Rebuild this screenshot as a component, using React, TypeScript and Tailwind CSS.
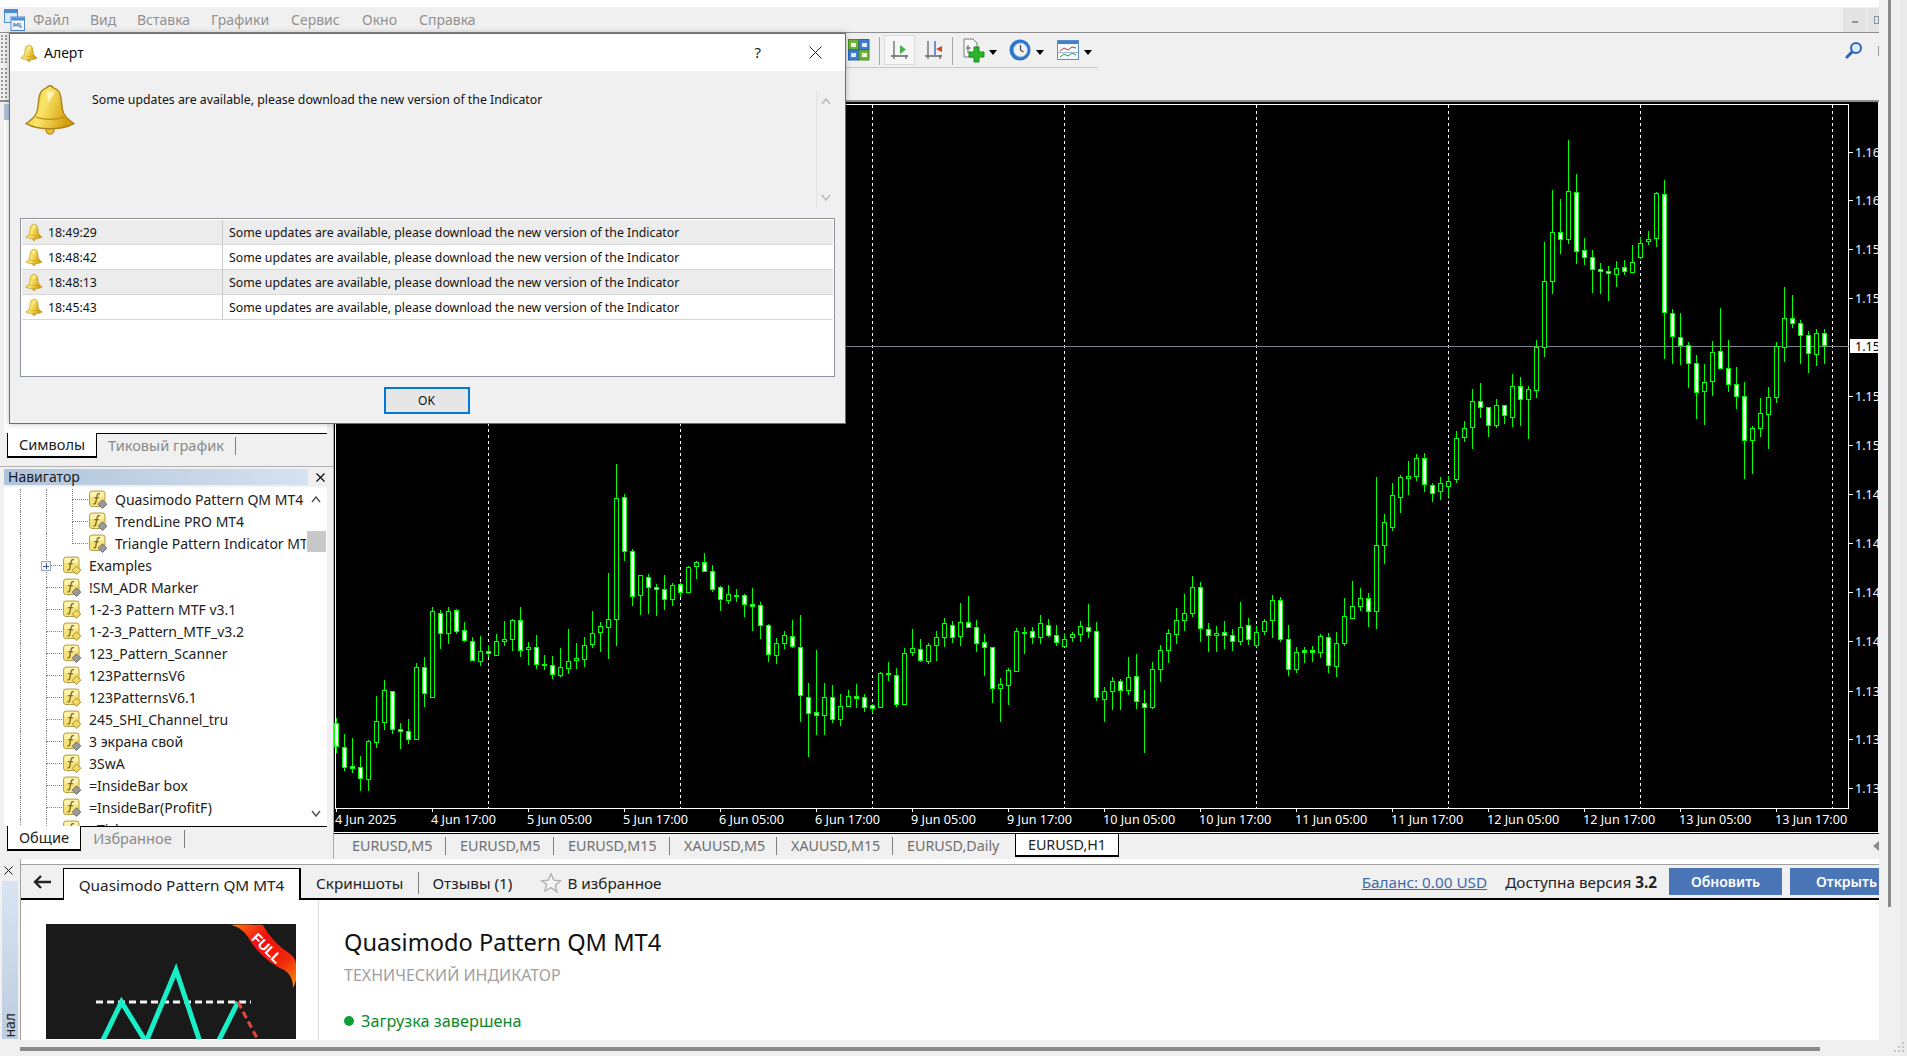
const LOWER: number[][] = [
  [895,910,978,1000,1],[942,980,1040,1052,1],[955,1037,1045,1058,1],[1008,1042,1075,1112,1],[960,964,1076,1112,0],
  [828,902,965,984,0],[780,811,905,930,0],[812,814,928,942,1],[910,928,934,987,1],[897,934,956,972,1],
  [730,742,956,956,0],[712,740,820,860,1],[562,574,830,830,0],[570,578,640,687,1],[562,572,640,672,0],
  [568,571,632,642,1],[606,631,661,665,1],[652,664,721,722,1],[648,694,722,738,0],[675,694,700,712,1],
  [642,664,704,704,0],[603,658,664,678,0],[598,601,658,692,0],[562,601,690,711,1],[666,682,688,735,0],
  [645,680,733,747,1],[705,733,734,750,0],[708,734,763,776,1],[685,742,764,770,0],[628,724,745,762,0],
  [670,715,721,747,0],[652,674,718,741,0],[574,638,673,684,0],[606,619,637,696,0],[460,598,622,716,0],
  [132,235,598,678,0],[223,232,394,423,1],[388,394,528,557,1],[466,466,526,585,0],[462,470,502,582,1],
  [492,500,508,587,1],[465,508,538,570,1],[488,496,538,558,0],[488,493,517,530,1],[438,442,517,517,0],
  [423,427,439,476,0],[400,427,452,456,1],[436,452,506,516,1],[498,502,538,572,1],[495,523,539,552,0],
  [507,524,524,546,0],[522,524,553,590,1],[505,553,557,632,1],[545,556,616,657,1],[612,614,703,725,1],
  [655,670,704,731,0],[632,646,668,687,0],[600,647,679,685,1],[585,680,826,905,1],[790,832,878,1010,1],
  [690,877,884,945,1],[790,832,884,945,0],[795,832,898,908,1],[822,857,898,917,0],[810,829,857,858,0],
  [792,827,835,863,1],[822,832,860,875,1],[853,854,865,878,1],[757,760,860,860,0],[727,760,761,782,0],
  [745,764,853,860,1],[685,700,851,851,0],[628,685,697,708,0],[657,686,721,725,1],[670,676,722,732,0],
  [632,652,676,722,0],[595,610,650,680,0],[604,614,650,668,1],[549,607,647,678,0],[528,607,622,622,1],
  [600,622,670,695,1],[642,667,682,768,1],[680,682,805,848,1],[774,793,805,905,0],[745,751,796,855,0],
  [625,634,752,755,0],[622,635,637,702,1],[622,634,652,672,1],[586,610,652,672,0],[598,614,646,650,1],
  [616,646,667,678,1],[640,658,677,679,0],[637,643,652,665,0],[603,619,643,665,0],[552,620,634,654,1],
  [606,634,832,843,1],[801,814,838,905,0],[771,784,814,869,0],[778,784,811,869,1],[711,771,811,825,0],
  [702,769,844,866,1],[810,848,862,1000,1],[726,748,862,868,0],[676,691,748,785,0],[628,640,691,728,0],
  [564,601,643,671,0],[522,580,601,633,0],[468,502,580,590,0],[487,502,625,665,1],[610,628,646,695,1],
  [618,640,646,695,0],[603,637,646,686,1],[628,646,664,692,1],[546,622,664,674,0],[595,616,658,675,1],
  [619,637,674,680,0],[598,604,634,645,0],[526,541,601,654,0],[532,541,658,665,1],[616,658,748,768,1],
  [682,697,748,758,0],[682,691,697,728,1],[678,691,697,726,1],[642,649,697,714,0],[640,650,736,758,1],
  [636,670,737,771,0],[534,589,670,678,0],[484,559,593,596,0],[504,535,559,573,0],[519,535,574,621,1],
  [171,376,574,627,0],[282,307,376,431,0],[189,226,320,333,0],
]

const UPPER: number[][] = [
  [1065,1072,1130,1180,0],[1024,1069,1075,1125,0],[1002,1015,1069,1082,0],[999,1015,1092,1115,1],[1090,1096,1120,1145,1],
  [1072,1090,1114,1140,0],[1069,1084,1099,1132,0],[934,955,1078,1088,0],[904,925,952,966,0],[808,844,922,987,0],
  [790,844,862,894,1],[860,862,916,951,1],[838,856,914,924,0],[856,856,886,912,1],[763,799,892,921,0],
  [771,799,838,918,1],[799,808,838,957,0],[660,682,811,834,0],[367,484,682,711,0],[210,337,484,522,0],
  [237,337,358,402,1],[60,214,358,372,0],[162,217,394,432,1],[354,391,412,435,1],[391,412,448,519,1],
  [430,448,454,522,1],[438,454,460,543,1],[423,445,463,501,0],[420,442,454,464,1],[376,427,456,459,0],
  [352,370,410,418,0],[333,358,364,375,0],[217,220,355,381,0],[180,223,577,717,1],[568,580,649,732,1],
  [579,652,676,735,1],[666,676,730,804,1],[705,730,817,897,1],[732,787,814,915,0],[663,697,784,828,0],
  [564,694,745,745,1],[660,745,793,816,1],[741,793,829,867,1],[786,829,961,1077,1],[918,925,961,1062,0],
  [835,880,925,951,0],[801,832,883,987,0],[666,678,832,849,0],[501,595,682,726,0],[525,595,610,624,1],
  [600,610,646,732,1],[633,646,700,759,1],[627,640,703,738,0],[627,640,676,732,1],
]

const CANDLES = [
  ...LOWER.map(c => ({ hi: 420 + c[0] / 3, top: 420 + c[1] / 3, bot: 420 + c[2] / 3, lo: 420 + c[3] / 3, fill: c[4] === 1 })),
  ...UPPER.map(c => ({ hi: 120 + c[0] / 3, top: 120 + c[1] / 3, bot: 120 + c[2] / 3, lo: 120 + c[3] / 3, fill: c[4] === 1 })),
]

const TIME_LABELS = ['4 Jun 2025', '4 Jun 17:00', '5 Jun 05:00', '5 Jun 17:00', '6 Jun 05:00', '6 Jun 17:00', '9 Jun 05:00', '9 Jun 17:00',
  '10 Jun 05:00', '10 Jun 17:00', '11 Jun 05:00', '11 Jun 17:00', '12 Jun 05:00', '12 Jun 17:00', '13 Jun 05:00', '13 Jun 17:00']
const PRICE_LABELS = ['1.16350', '1.16120', '1.15890', '1.15660', '1.15200', '1.15010', '1.14970', '1.14740', '1.14510', '1.14280', '1.13820', '1.13590', '1.13360']
const PRICE_Y = [152, 200, 249, 298, 396, 445, 494, 543, 592, 641, 691, 739, 788]
const GRID_X = [489, 681, 873, 1065, 1257, 1449, 1641, 1833]

const ALERTS = ['18:49:29', '18:48:42', '18:48:13', '18:45:43']
const ALERT_TEXT = 'Some updates are available, please download the new version of the Indicator'

const MENU = [['Файл', 'w-[57px]'], ['Вид', 'w-[47px]'], ['Вставка', 'w-[74px]'], ['Графики', 'w-[80px]'], ['Сервис', 'w-[71px]'], ['Окно', 'w-[57px]'], ['Справка', 'w-[70px]']]

const CHART_TABS = [['EURUSD,M5', 'w-[108px] border-r'], ['EURUSD,M5', 'w-[108px] border-r'], ['EURUSD,M15', 'w-[116px] border-r'], ['XAUUSD,M5', 'w-[107px] border-r'], ['XAUUSD,M15', 'w-[116px] border-r'], ['EURUSD,Daily', 'w-[122px]']]

const TREE: { name: string; gray: boolean; deep?: boolean; last?: boolean; plus?: boolean }[] = [
  { name: 'Quasimodo Pattern QM MT4', gray: true, deep: true },
  { name: 'TrendLine PRO MT4', gray: true, deep: true },
  { name: 'Triangle Pattern Indicator MT4', gray: true, deep: true, last: true },
  { name: 'Examples', gray: false, plus: true },
  { name: '!SM_ADR Marker', gray: true },
  { name: '1-2-3 Pattern MTF v3.1', gray: false },
  { name: '1-2-3_Pattern_MTF_v3.2', gray: false },
  { name: '123_Pattern_Scanner', gray: true },
  { name: '123PatternsV6', gray: false },
  { name: '123PatternsV6.1', gray: false },
  { name: '245_SHI_Channel_tru', gray: false },
  { name: '3 экрана свой', gray: true },
  { name: '3SwA', gray: false },
  { name: '=InsideBar box', gray: true },
  { name: '=InsideBar(ProfitF)', gray: true },
  { name: '=Ticks', gray: false },
]

function Bell({ size }: { size: number }) {
  return (
    <svg width={size} height={size} viewBox="0 0 48 48" className="shrink-0">
      <defs>
        <linearGradient id="bell-g" x1="0" y1="0" x2="1" y2="0.3">
          <stop offset="0" stopColor="#e2b51e" />
          <stop offset="0.45" stopColor="#fbe56a" />
          <stop offset="1" stopColor="#d49f0c" />
        </linearGradient>
      </defs>
      <circle cx="24" cy="43.5" r="3.6" fill="#e8bf30" stroke="#a9831a" strokeWidth="1.2" />
      <path d="M24 2.5c-1.6 0-2.4 1-2.8 1.8C16.500 5.500 14.500 9 13.800 14L12.600 24C11.800 30 7.500 33.500 2 37.500c6 3.400 14 4.800 22 4.800s16-1.400 22-4.800C40.500 33.500 36.200 30 35.400 24L34.200 14C33.500 9 31.500 5.500 26.800 4.300 26.400 3.500 25.600 2.500 24 2.500Z" fill="url(#bell-g)" stroke="#a9831a" strokeWidth="1.3" />
      <path d="M11 31.500c8 2.600 18 2.600 26 0" fill="none" stroke="#b8901c" strokeWidth="1.1" />
      <path d="M21 8 29 7.500 22 19Z" fill="#fffbd8" opacity="0.7" />
    </svg>
  )
}

function IndicatorIcon({ gray }: { gray: boolean }) {
  return (
    <svg width="20" height="20" viewBox="0 0 20 20" className="shrink-0">
      <rect x="1.500" y="1" width="15.500" height="15.500" rx="2.500" fill="#f6e27a" stroke="#b7a04c" />
      <rect x="2.500" y="2" width="13.500" height="5" rx="1.500" fill="#fdf3ae" />
      <path d="M12 3.800c-1.600-.6-2.500.2-2.800 1.600L7.700 12.500c-.3 1.300-1.100 1.800-2.300 1.200M6.200 7.700h4.600" fill="none" stroke="#7d6a1e" strokeWidth="1.300" />
      <path d="M14.500 9.800 18.800 14.200 14.500 18.500 10.200 14.200Z" fill={gray ? '#9a9a9a' : '#f2d860'} stroke={gray ? '#6f6f6f' : '#a8923c'} />
    </svg>
  )
}

function TreeRow({ name, gray, deep, last, plus }: (typeof TREE)[number]) {
  return (
    <div className="flex h-[22px] items-center">
      <span className="ml-[16px] h-full w-[26px] shrink-0 border-l border-dotted border-[#808080]" />
      {deep && <span className="h-full w-[26px] shrink-0 border-l border-dotted border-[#808080]" />}
      <span className="relative flex h-full w-[16px] shrink-0 flex-col">
        <span className="h-[11px] border-b border-l border-dotted border-[#808080]" />
        {!last && <span className="h-[11px] border-l border-dotted border-[#808080]" />}
        {plus && (
          <span className="absolute -left-[5px] top-[6px] flex h-[10px] w-[10px] items-center justify-center border border-[#9aa7bd] bg-[#f4f6fa]">
            <span className="absolute h-[1px] w-[6px] bg-[#3a5a9a]" />
            <span className="absolute h-[6px] w-[1px] bg-[#3a5a9a]" />
          </span>
        )}
      </span>
      <IndicatorIcon gray={gray} />
      <span className="ml-[7px] whitespace-nowrap text-[14px] leading-[22px] text-[#222]">{name}</span>
    </div>
  )
}

function PanelTabs({ active, activeW, other, otherW }: { active: string; activeW: string; other: string; otherW: string }) {
  return (
    <div className="ml-[3px] flex h-[25px] text-[14.6px]">
      <div className={`${activeW} flex items-center justify-center border-x border-b-2 border-black bg-white text-[#222]`}>{active}</div>
      <div className="flex flex-1 items-start border-t border-black">
        <div className={`${otherW} mt-[3px] flex h-[18px] items-center justify-center border-r border-[#808080] text-[#8a8a8a]`}>{other}</div>
      </div>
    </div>
  )
}

function Chart() {
  return (
    <svg viewBox="335 102 1544 730" width="1544" height="730" shapeRendering="crispEdges" className="block bg-black font-['Noto_Sans',sans-serif]">
      <path d="M336.500 104.500H1849.500V808.500H336.500Z" fill="none" stroke="#fff" />
      {GRID_X.map(x => <line key={x} x1={x + 0.5} x2={x + 0.5} y1="105" y2="808" stroke="#fff" strokeDasharray="3 3" />)}
      <line x1="337" x2="1850" y1="346.500" y2="346.500" stroke="#7c818b" />
      {CANDLES.map((c, i) => {
        const x = 337 + i * 8
        return (
          <g key={i}>
            <line x1={x + 0.5} x2={x + 0.5} y1={c.hi} y2={c.lo} stroke="#00ff00" />
            <rect x={x - 1.5} y={Math.round(c.top) + 0.5} width="4" height={Math.max(Math.round(c.bot) - Math.round(c.top), 1)} fill={c.fill ? '#fff' : '#000'} stroke="#00ff00" />
          </g>
        )
      })}
      {TIME_LABELS.map((t, i) => (
        <g key={t}>
          <line x1={337.5 + i * 96} x2={337.5 + i * 96} y1="809" y2="812" stroke="#fff" />
          <text x={336 + i * 96} y="824" fontSize="12.6" fill="#fff" shapeRendering="auto">{t}</text>
        </g>
      ))}
      {PRICE_LABELS.map((p, i) => (
        <g key={p}>
          <line x1="1850" x2="1854" y1={PRICE_Y[i] + 0.5} y2={PRICE_Y[i] + 0.5} stroke="#fff" />
          <text x="1856" y={PRICE_Y[i] + 5} fontSize="12.6" fill="#eef2ff" shapeRendering="auto">{p}</text>
        </g>
      ))}
      <rect x="1851" y="339" width="28" height="14" fill="#fff" />
      <text x="1856" y="351" fontSize="12.6" fill="#000" shapeRendering="auto">1.15430</text>
    </svg>
  )
}

function ToolbarIcons() {
  return (
    <div className="flex h-[35px] w-[253px] items-start border-b border-[#c8c8c8]">
      <svg width="22" height="22" viewBox="0 0 22 22" className="ml-[3px] mt-[6px] shrink-0">
        <rect x="0.500" y="0.500" width="10" height="10" fill="#6fb13c" stroke="#4f8d22" />
        <rect x="11" y="0.500" width="10" height="10" fill="#3c7fd0" stroke="#2a62b0" />
        <rect x="0.500" y="11" width="10" height="10" fill="#3c7fd0" stroke="#2a62b0" />
        <rect x="11" y="11" width="10" height="10" fill="#6fb13c" stroke="#4f8d22" />
        <rect x="3" y="4" width="5" height="4" fill="#eaf6dc" />
        <rect x="14" y="4" width="5" height="4" fill="#dfeafa" />
        <rect x="3" y="14" width="5" height="4" fill="#dfeafa" />
        <rect x="14" y="14" width="5" height="4" fill="#eaf6dc" />
      </svg>
      <span className="ml-[9px] mt-[4px] h-[28px] w-[1px] shrink-0 bg-[#a8a8a8]" />
      <div className="ml-[4px] mt-[2px] flex h-[30px] w-[31px] shrink-0 items-center justify-center border border-[#dcdcdc] bg-[#f6f6f6]">
        <svg width="20" height="20" viewBox="0 0 20 20">
          <path d="M4 1v16M1 16h17M4 17v2M16 15v4" stroke="#666" strokeWidth="1.300" fill="none" />
          <path d="M10 5l6 4.500-6 4.500Z" fill="#3cb44a" />
        </svg>
      </div>
      <svg width="20" height="20" viewBox="0 0 20 20" className="ml-[9px] mt-[7px] shrink-0">
        <path d="M4 1v16M1 16h17M4 17v2M16 15v4" stroke="#666" strokeWidth="1.300" fill="none" />
        <path d="M11 1v14" stroke="#2f6db5" strokeWidth="1.400" />
        <path d="M12 9l6-3v6Z" fill="#d0431e" />
      </svg>
      <span className="ml-[8px] mt-[4px] h-[28px] w-[1px] shrink-0 bg-[#a8a8a8]" />
      <svg width="25" height="25" viewBox="0 0 25 25" className="ml-[10px] mt-[5px] shrink-0">
        <path d="M1 1h9l4 4v14H1Z" fill="#f8f8f8" stroke="#7a7a7a" />
        <path d="M5 7v8M3 10h5" stroke="#555" fill="none" />
        <path d="M11 9h5v5h5v5h-5v5h-5v-5H6v-5h5Z" fill="#2bb52b" stroke="#168a16" />
      </svg>
      <svg width="8" height="5" viewBox="0 0 8 5" className="ml-[1px] mt-[17px] shrink-0"><path d="M0 0h8L4 5Z" fill="#000" /></svg>
      <svg width="22" height="22" viewBox="0 0 22 22" className="ml-[12px] mt-[6px] shrink-0">
        <circle cx="11" cy="11" r="10.500" fill="#2a76c8" />
        <circle cx="11.500" cy="11" r="7" fill="#f3f3f3" stroke="#8ab8e6" />
        <path d="M11.500 6v5l3 2" stroke="#444" fill="none" strokeWidth="1.200" />
      </svg>
      <svg width="8" height="5" viewBox="0 0 8 5" className="ml-[5px] mt-[17px] shrink-0"><path d="M0 0h8L4 5Z" fill="#000" /></svg>
      <svg width="22" height="20" viewBox="0 0 22 20" className="ml-[13px] mt-[7px] shrink-0">
        <rect x="0.500" y="0.500" width="21" height="19" fill="#f4f7fb" stroke="#5c8ec8" />
        <rect x="1" y="1" width="20" height="3" fill="#3f7fd0" />
        <path d="M3 11l4-3 4 2 4-3 4 1" stroke="#c03c1c" fill="none" />
        <path d="M3 17l4-3 4 2 4-3 4 2" stroke="#2f9a3a" fill="none" />
        <path d="M1 12.500h20" stroke="#9cb8dc" />
      </svg>
      <svg width="8" height="5" viewBox="0 0 8 5" className="ml-[5px] mt-[17px] shrink-0"><path d="M0 0h8L4 5Z" fill="#000" /></svg>
    </div>
  )
}

function ProductImage() {
  return (
    <svg width="250" height="115" viewBox="0 0 250 115" className="mt-[24px] ml-[25px] block shrink-0 bg-[#1a1a1a]">
      <defs>
        <linearGradient id="ribbon-g" x1="0" y1="0" x2="1" y2="1">
          <stop offset="0" stopColor="#ff7a10" />
          <stop offset="0.35" stopColor="#f01010" />
          <stop offset="0.7" stopColor="#f02808" />
          <stop offset="1" stopColor="#f89010" />
        </linearGradient>
      </defs>
      <path d="M185 1C195 0 205 1 217 1 222 10 230 20 240 27 247 31 250 36 250 40L250 56C249 60 248 62 247 64 247 55 244 50 238 46 225 40 213 30 205 18 200 8 193 3 185 1Z" fill="url(#ribbon-g)" />
      <text x="221" y="29" textAnchor="middle" fontSize="14" fontWeight="700" fill="#fff" transform="rotate(45 221 24)" className="font-['Liberation_Sans',sans-serif]">FULL</text>
      <path d="M50 78H205" stroke="#f2f2f2" strokeWidth="3" strokeDasharray="7 4" />
      <path d="M56 118 75.500 78 100 118 130 46 154 118M172 118 192 78" fill="none" stroke="#19efc6" strokeWidth="5" />
      <path d="M192 78 212 116" stroke="#e8443c" strokeWidth="3" strokeDasharray="7 4" />
    </svg>
  )
}

function AlertDialog() {
  return (
    <div className="absolute left-[9px] top-[33px] flex h-[391px] w-[837px] flex-col border border-[#6e6e6e] bg-[#f0f0f0] shadow-[0_0_6px_rgba(0,0,0,0.25)]">
      <div className="flex h-[37px] items-center bg-white pl-[10px]">
        <Bell size={18} />
        <span className="ml-[6px] text-[14px] text-[#111]">Алерт</span>
        <span className="ml-auto text-[15px] text-[#222]">?</span>
        <svg width="13" height="13" viewBox="0 0 13 13" className="ml-[48px] mr-[23px]"><path d="M.5.500l12 12M12.500.500l-12 12" stroke="#222" fill="none" /></svg>
      </div>
      <div className="flex h-[147px]">
        <div className="ml-[14px] mt-[12px]"><Bell size={52} /></div>
        <p className="ml-[16px] mt-[20px] whitespace-nowrap text-[12.3px] leading-[18px] text-[#111]">{ALERT_TEXT}</p>
        <div className="ml-auto mr-[10px] mt-[20px] flex h-[117px] w-[19px] flex-col items-center justify-between border-l border-[#e2e2e2] py-[7px]">
          <svg width="10" height="7" viewBox="0 0 10 7"><path d="M1 6l4-5 4 5" fill="none" stroke="#b9b9b9" strokeWidth="1.500" /></svg>
          <svg width="10" height="7" viewBox="0 0 10 7"><path d="M1 1l4 5 4-5" fill="none" stroke="#b9b9b9" strokeWidth="1.500" /></svg>
        </div>
      </div>
      <div className="mx-[10px] h-[159px] border border-[#8f949c] bg-white p-[1px]">
        {ALERTS.map((t, i) => (
          <div key={t} className={`flex h-[25px] border-b border-[#d8d8d8] ${i % 2 === 0 ? 'bg-[#ececec]' : 'bg-white'}`}>
            <div className="flex w-[201px] items-center border-r border-[#c8c8c8] pl-[3px]">
              <Bell size={18} />
              <span className="ml-[5px] pt-[2px] text-[12.3px] text-[#111]">{t}</span>
            </div>
            <div className="flex items-center pl-[6px] pt-[2px] text-[12.3px] text-[#111]">{ALERT_TEXT}</div>
          </div>
        ))}
      </div>
      <div className="flex flex-1 items-start justify-center pr-[2px] pt-[10px]">
        <button className="h-[27px] w-[86px] border-2 border-[#0078d7] bg-[#e6e6e6] text-[12px] text-[#111]">OK</button>
      </div>
    </div>
  )
}

export default function App() {
  return (
    <div className="relative flex h-[1056px] w-[1907px] overflow-hidden bg-[#f0f0f0] font-['Noto_Sans',sans-serif]">
      <div className="flex w-[1879px] shrink-0 flex-col overflow-hidden">
        <div className="h-[7px] bg-white" />

        {/* Menu */}
        <div className="flex h-[25px] items-center">
          <svg width="21" height="22" viewBox="0 0 21 22" className="ml-[4px] shrink-0">
            <rect x="0.500" y="0.500" width="13" height="13" fill="#dbe9f8" stroke="#4d8bd0" />
            <rect x="1" y="1" width="12" height="3" fill="#4d8bd0" />
            <rect x="7" y="8" width="13.500" height="13.500" fill="#f2f7fd" stroke="#4d8bd0" />
            <rect x="7.500" y="8.500" width="12.500" height="3" fill="#4d8bd0" />
            <path d="M10 18v-4l2 3 2-3v4M16 14v4h2" stroke="#3a6ea8" fill="none" />
          </svg>
          <div className="ml-[8px] flex text-[14px] text-[#909090]">
            {MENU.map(([m, w]) => <span key={m} className={w}>{m}</span>)}
          </div>
          <div className="ml-auto flex h-full gap-[1px] pt-[1px]">
            <span className="flex w-[23px] items-center justify-center bg-[#e4e4e4] pt-[4px]"><span className="h-[2px] w-[6px] bg-[#8a94a2]" /></span>
            <span className="flex w-[12px] items-center bg-[#e4e4e4] pl-[7px]"><span className="h-[8px] w-[5px] border border-[#8a94a2]" /></span>
          </div>
        </div>

        {/* Toolbar */}
        <div className="flex h-[68px] border-t border-[#8e8e8e] bg-[#f0f0f0]">
          <div className="flex w-[9px] flex-col gap-[5px] pl-[1px] pt-[2px]">
            <span className="h-[28px] w-[6px] border-x-2 border-dotted border-[#9a9a9a]" />
            <span className="h-[30px] w-[6px] border-x-2 border-dotted border-[#9a9a9a]" />
          </div>
          <div className="w-[836px]" />
          <ToolbarIcons />
          <svg width="18" height="18" viewBox="0 0 18 18" className="ml-auto mt-[8px]">
            <circle cx="11" cy="7" r="5" fill="#dce9f8" stroke="#2f62b8" strokeWidth="2" />
            <path d="M7 11 2 16" stroke="#2f62b8" strokeWidth="3" strokeLinecap="round" />
          </svg>
          <span className="ml-[15px] mt-[13px] h-[10px] w-[1px] bg-[#9a9a9a]" />
        </div>

        {/* Navigator + chart */}
        <div className="flex h-[759px] border-t-2 border-[#8e8e8e]">
          <div className="flex w-[334px] shrink-0 flex-col border-r border-[#a8a8a8] pl-[4px] pr-[6px] pt-[2px]">
            <div className="h-[16px] bg-gradient-to-r from-[#afc3da] to-[#d5e2f0]" />
            <div className="h-[313px] bg-white" />
            <PanelTabs active="Символы" activeW="w-[90px]" other="Тиковый график" otherW="w-[139px]" />
            <div className="h-[8px]" />
            <div className="-ml-[4px] -mr-[6px] h-[1px] bg-[#b0b0b0]" />
            <div className="mt-[2px] flex h-[16px] items-center">
              <div className="flex h-full w-[304px] items-center bg-gradient-to-r from-[#afc3da] to-[#d5e2f0] pl-[4px] text-[14px] leading-none text-[#1a1a1a]">Навигатор</div>
              <svg width="9" height="9" viewBox="0 0 9 9" className="ml-[8px]"><path d="M.5.500l8 8M8.500.500l-8 8" stroke="#111" strokeWidth="1.300" /></svg>
            </div>
            <div className="mt-[2px] flex h-[339px] overflow-hidden bg-white">
              <div className="h-full w-[302px] overflow-hidden pt-[2px]">
                {TREE.map(t => <TreeRow key={t.name} {...t} />)}
              </div>
              <div className="flex w-[20px] shrink-0 flex-col items-center">
                <svg width="10" height="7" viewBox="0 0 10 7" className="mt-[9px]"><path d="M1 6l4-5 4 5" fill="none" stroke="#555" strokeWidth="1.500" /></svg>
                <div className="mt-[28px] h-[21px] w-[19px] bg-[#c8c8c8]" />
                <svg width="10" height="7" viewBox="0 0 10 7" className="mt-[258px]"><path d="M1 1l4 5 4-5" fill="none" stroke="#555" strokeWidth="1.500" /></svg>
              </div>
            </div>
            <PanelTabs active="Общие" activeW="w-[74px]" other="Избранное" otherW="w-[104px]" />
          </div>

          <div className="flex min-w-0 flex-1 flex-col">
            <Chart />
            <div className="h-[2px] border-b border-black bg-white" />
            <div className="flex h-[25px] items-center pb-[2px] pl-[4px] text-[14.3px] text-[#6f6f6f]">
              {CHART_TABS.map(([t, w], i) => (
                <div key={i} className={`${w} flex h-[18px] items-center border-[#808080] pl-[14px]`}>{t}</div>
              ))}
              <div className="flex h-[23px] w-[104px] items-center justify-center border-x border-b-2 border-black bg-white text-[#222]">EURUSD,H1</div>
              <svg width="6" height="10" viewBox="0 0 6 10" className="ml-auto"><path d="M6 0v10L0 5Z" fill="#8a8a8a" /></svg>
            </div>
          </div>
        </div>

        {/* Market product pane */}
        <div className="flex h-[181px] bg-white">
          <div className="flex w-[20px] shrink-0 flex-col bg-[#f0f0f0]">
            <svg width="9" height="9" viewBox="0 0 9 9" className="ml-[4px] mt-[7px]"><path d="M.5.500l8 8M8.500.500l-8 8" stroke="#111" /></svg>
            <div className="ml-[2px] mt-[6px] flex h-[158px] w-[16px] items-end bg-gradient-to-b from-[#d8e4f1] to-[#bccde0]">
              <span className="mb-[1px] text-[14px] leading-[16px] text-[#222] [writing-mode:vertical-rl] rotate-180">нал</span>
            </div>
          </div>
          <div className="flex min-w-0 flex-1 flex-col border-l border-[#a0a0a0]">
            <div className="mt-[5px] flex h-[36px] items-end border-t border-[#a0a0a0] bg-[#f0f0f0] text-[15.3px] text-[#222]">
              <div className="flex h-full w-[42px] items-center justify-center border-b-2 border-black">
                <svg width="18" height="14" viewBox="0 0 18 14"><path d="M18 7H3M8 1 2 7l6 6" fill="none" stroke="#222" strokeWidth="2.400" /></svg>
              </div>
              <div className="flex h-[32px] w-[238px] items-center justify-center border-x border-t border-black border-r-2 bg-white pt-[2px]">Quasimodo Pattern QM MT4</div>
              <div className="flex h-full flex-1 items-center border-b-2 border-black">
                <span className="ml-[15px] mt-[4px]">Скриншоты</span>
                <span className="ml-[15px] mt-[2px] h-[22px] w-[1px] bg-[#808080]" />
                <span className="ml-[13px] mt-[4px]">Отзывы (1)</span>
                <svg width="22" height="22" viewBox="0 0 24 24" className="ml-[28px] mt-[2px]"><path d="M12 2l3 6.800 7.400.7-5.600 4.900 1.700 7.300L12 17l-6.500 3.700 1.700-7.300L1.600 9.500 9 8.800Z" fill="#f4f4f4" stroke="#b0b0b0" strokeWidth="1.500" /></svg>
                <span className="ml-[5px] mt-[4px]">В избранное</span>
                <a className="ml-auto mt-[2px] text-[#3f69a8] underline">Баланс: 0.00 USD</a>
                <span className="ml-[18px] mt-[2px]">Доступна версия <b>3.2</b></span>
                <span className="ml-[12px] flex h-[27px] w-[113px] items-center justify-center bg-[#4a76b8] text-[14px] font-semibold text-white">Обновить</span>
                <span className="ml-[8px] flex h-[27px] w-[89px] shrink-0 items-center justify-start bg-[#4a76b8] pl-[26px] text-[14px] font-semibold text-white">Открыть</span>
              </div>
            </div>
            <div className="flex flex-1 overflow-hidden">
              <div className="h-full w-[298px] shrink-0 border-r border-[#dcdcdc]"><ProductImage /></div>
              <div className="pl-[25px] pt-[25px]">
                <h1 className="whitespace-nowrap text-[23.6px] leading-[34px] text-[#111]">Quasimodo Pattern QM MT4</h1>
                <p className="mt-[6px] text-[16px] leading-[20px] text-[#a0a0a0]">ТЕХНИЧЕСКИЙ ИНДИКАТОР</p>
                <div className="mt-[25px] flex items-center text-[16.3px] leading-[22px] text-[#0c8a2c]">
                  <span className="h-[10px] w-[10px] rounded-full bg-[#12a035]" />
                  <span className="ml-[7px]">Загрузка завершена</span>
                </div>
              </div>
            </div>
          </div>
        </div>

        {/* Bottom scrollbar */}
        <div className="flex-1 pl-[20px] pt-[7px]">
          <div className="h-[4px] w-[1800px] bg-[#8a8a8a]" />
        </div>
      </div>

      {/* Outer window edge */}
      <div className="w-[9px]" />
      <div className="h-[907px] w-[3px] bg-[#8a8a8a]" />
      <div className="w-[9px]" />
      <div className="w-[7px] bg-[#ebebeb]" />
      <svg width="13" height="13" viewBox="0 0 13 13" className="absolute bottom-[2px] right-[2px]">
        <path d="M10 1h2v2h-2ZM10 5h2v2h-2ZM6 5h2v2H6ZM10 9h2v2h-2ZM6 9h2v2H6ZM2 9h2v2H2Z" fill="#c4c4c4" />
      </svg>

      <AlertDialog />
    </div>
  )
}
